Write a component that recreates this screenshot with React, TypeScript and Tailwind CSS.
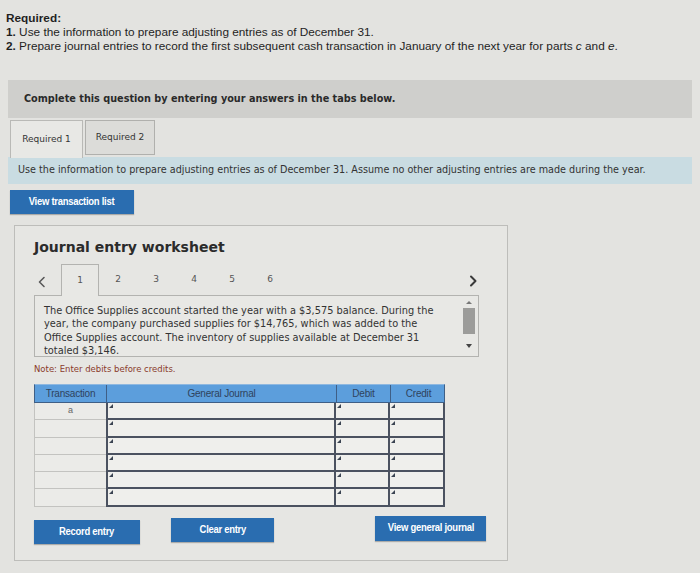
const rows = ["a", "", "", "", "", ""];
const steps = [1, 2, 3, 4, 5, 6];

// small dark marker in the top-left corner of each input cell
const Marker = () => (
  <span className="absolute left-[1px] top-[1px] h-0 w-0 border-l-[4px] border-t-[4px] border-l-transparent border-t-[#3b4452] rotate-90"></span>
);

const BlueButton = ({ label, className }: { label: string; className: string }) => (
  <button
    className={`flex items-center justify-center whitespace-nowrap bg-[#2a6db0] text-white font-bold font-['Liberation_Sans'] text-[10.5px] tracking-[-0.3px] shadow-[0_1px_1px_rgba(0,0,0,0.25)] ${className}`}
  >
    <span className="inline-block scale-x-90">{label}</span>
  </button>
);

const Chevron = ({ dir }: { dir: "left" | "right" }) => (
  <svg width="9" height="12" viewBox="0 0 9 12" fill="none">
    <path
      d={dir === "left" ? "M7 1.5 L2.5 6 L7 10.5" : "M2 1.5 L6.5 6 L2 10.5"}
      stroke={dir === "left" ? "#5a5a5a" : "#3a3a3a"}
      strokeWidth={dir === "left" ? 1.6 : 2}
      strokeLinecap="round"
      strokeLinejoin="round"
    />
  </svg>
);

export default function App() {
  return (
    <div className="relative h-[573px] w-[700px] overflow-hidden bg-[#e3e3e0] text-[#222]">
      {/* Instructions */}
      <div className="pl-[6px] pt-[11px] font-['Liberation_Sans'] text-[11.8px] leading-[14px] text-[#1f1f1f]">
        <p className="font-bold">Required:</p>
        <p>
          <span className="font-bold">1.</span> Use the information to prepare adjusting entries as of December 31.
        </p>
        <p>
          <span className="font-bold">2.</span> Prepare journal entries to record the first subsequent cash transaction in January of the next year for parts <i>c</i> and <i>e</i>.
        </p>
      </div>

      <div className="mx-[8px] mt-[27px] flex h-[38px] items-center bg-[#cfcfcc] pl-[16px] font-['DejaVu_Sans'] text-[9.7px] font-bold text-[#2a2a2a]">
        Complete this question by entering your answers in the tabs below.
      </div>

      {/* Tabs */}
      <div className="relative z-10 mx-[10px] flex h-[39px] items-end gap-[2px] font-['DejaVu_Sans'] text-[9px] text-[#333]">
        <div className="-mb-[1px] flex h-[38px] w-[73px] items-center justify-center border border-b-0 border-[#b9b9b6] bg-[#e8e8e5]">
          Required 1
        </div>
        <div className="mb-[2px] flex h-[35px] w-[70px] items-center justify-center border border-[#b0b0ad] bg-[#dcdcd9]">
          Required 2
        </div>
      </div>

      <div className="mx-[8px] flex h-[27px] items-center bg-[#c9dce2] pl-[10px] font-['DejaVu_Sans'] text-[9.65px] text-[#333]">
        Use the information to prepare adjusting entries as of December 31. Assume no other adjusting entries are made during the year.
      </div>

      <BlueButton label="View transaction list" className="ml-[10px] mt-[6px] h-[24px] w-[124px]" />

      {/* Worksheet */}
      <div className="ml-[14px] mt-[11px] h-[336px] w-[494px] border border-[#bdbdba] bg-[#e6e6e3] pl-[19px] pt-[11px]">
        <h2 className="font-['DejaVu_Sans'] text-[14px] font-bold text-[#2b2b2b]">Journal entry worksheet</h2>

        <div className="relative mt-[6px] flex h-[31px] w-[445px] items-end font-['DejaVu_Sans'] text-[9px] text-[#555]">
          <span className="flex h-[31px] w-[27px] items-center pl-[3px] pt-[4px]">
            <Chevron dir="left" />
          </span>
          {steps.map((n) =>
            n === 1 ? (
              <div key={n} className="-mb-[1px] flex h-[32px] w-[38px] items-center justify-center border border-b-0 border-[#b3b3b0] bg-[#e8e8e5]">
                {n}
              </div>
            ) : (
              <div key={n} className="flex h-[31px] w-[38px] items-center justify-center">
                {n}
              </div>
            )
          )}
          <span className="absolute right-[1px] top-[11px]">
            <Chevron dir="right" />
          </span>
        </div>

        <div className="flex h-[62px] w-[445px] overflow-hidden border border-[#b3b3b0] bg-[#e8e8e5]">
          <p className="flex-1 pl-[9px] pr-[24px] pt-[8px] font-['DejaVu_Sans'] text-[9.8px] leading-[13.3px] text-[#333]">
            The Office Supplies account started the year with a $3,575 balance. During the year, the company purchased supplies for $14,765, which was added to the Office Supplies account. The inventory of supplies available at December 31 totaled $3,146.
          </p>
          <div className="mr-[2px] flex w-[14px] flex-col items-center pt-[5px]">
            <span className="h-0 w-0 border-x-[3px] border-b-[3px] border-x-transparent border-b-[#777]"></span>
            <span className="mt-[4px] h-[26px] w-[12px] bg-[#9c9c9a]"></span>
            <span className="mt-[10px] h-0 w-0 border-x-[3px] border-t-[4px] border-x-transparent border-t-[#444]"></span>
          </div>
        </div>

        <p className="mt-[6px] font-['DejaVu_Sans'] text-[8.5px] leading-[12px] text-[#8a3b2c]">Note: Enter debits before credits.</p>

        {/* Journal table */}
        <div className="mt-[9px] w-[411px] font-['Liberation_Sans'] text-[10px] tracking-[-0.2px]">
          <div className="grid h-[19px] grid-cols-[72px_230px_54px_55px] border border-[#3f5f86] border-t-[#8fb8e0] bg-[#5c9edc] text-[#2f435c]">
            <div className="flex items-center justify-center border-r border-[#3f5f86]">Transaction</div>
            <div className="flex items-center justify-center border-r border-[#3f5f86]">General Journal</div>
            <div className="flex items-center justify-center border-r border-[#3f5f86]">Debit</div>
            <div className="flex items-center justify-center">Credit</div>
          </div>
          {rows.map((t, i) => (
            <div key={i} className="grid h-[17.3px] grid-cols-[72px_230px_54px_55px]">
              <div className="flex items-center justify-center border-b border-l border-[#c3c3c0] bg-[#ebebe8] text-[9px] text-[#666]">
                {t}
              </div>
              <div className="relative border-x-2 border-b-2 border-[#4b5260] bg-[#efefec]">
                <Marker />
              </div>
              <div className="relative border-b-2 border-r-2 border-[#4b5260] bg-[#efefec]">
                <Marker />
              </div>
              <div className="relative border-b-2 border-r-2 border-[#4b5260] bg-[#efefec]">
                <Marker />
              </div>
            </div>
          ))}
        </div>

        <div className="mt-[11px] flex items-start">
          <BlueButton label="Record entry" className="mt-[2px] h-[24px] w-[106px]" />
          <BlueButton label="Clear entry" className="ml-[31px] h-[24px] w-[103px]" />
          <BlueButton label="View general journal" className="ml-[101px] -mt-[2px] h-[25px] w-[111px]" />
        </div>
      </div>
    </div>
  );
}
